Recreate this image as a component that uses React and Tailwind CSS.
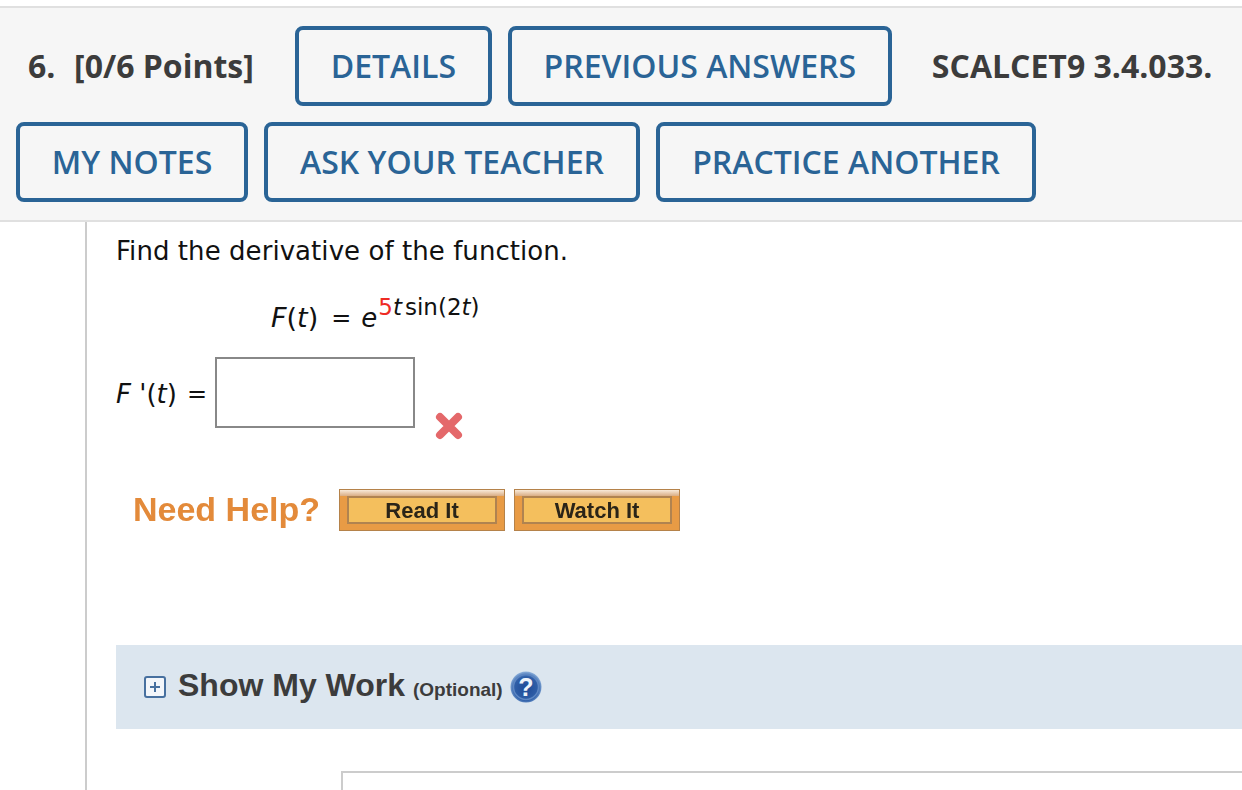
const OPEN = "font-['Open_Sans',sans-serif]";
const DEJA = "font-['DejaVu_Sans',sans-serif]";
const ARIAL = "font-['Liberation_Sans',Arial,sans-serif]";

function OutlineButton({ children, className = "" }) {
  return (
    <button className={`h-20 rounded-lg border-4 border-[#2a6496] bg-transparent text-[32px] font-semibold text-[#2a6496] ${className}`}>
      {children}
    </button>
  );
}

function HelpButton({ children }) {
  return (
    <button className="relative h-[42px] w-[166px] border border-[#b5824a] bg-[#e89b45] p-0">
      <span className="absolute left-0 right-0 top-0 h-[6px] bg-gradient-to-b from-[#f8ead9] to-[#d9ad84]" />
      <span className={`absolute left-[7px] right-[7px] top-[6px] bottom-[6px] flex items-center justify-center border-2 border-[#b08350] bg-[#f4bf5d] pt-[1px] text-[22px] font-bold text-[#2a2418] blur-[0.4px] ${ARIAL}`}>
        {children}
      </span>
    </button>
  );
}

export default function App() {
  return (
    <div className={`h-[790px] w-[1242px] overflow-hidden bg-white ${OPEN}`}>
      <header className="mt-[6px] flex h-[216px] flex-col gap-4 border-y-2 border-[#e0e0e0] bg-[#f6f6f6] pl-4 pt-[18px]">
        <div className="flex items-center">
          <span className="ml-3 whitespace-pre text-[32px] font-bold text-[#3c3c3c]">6.  <span className="ml-[2px]">[0/6 Points]</span></span>
          <OutlineButton className="ml-[41px] w-[197px]">DETAILS</OutlineButton>
          <OutlineButton className="ml-4 w-[384px]">PREVIOUS ANSWERS</OutlineButton>
          <span className="ml-10 text-[32px] font-bold text-[#3c3c3c]">SCALCET9 3.4.033.</span>
        </div>
        <div className="flex items-center gap-4">
          <OutlineButton className="w-[232px]">MY NOTES</OutlineButton>
          <OutlineButton className="w-[376px]">ASK YOUR TEACHER</OutlineButton>
          <OutlineButton className="w-[380px]">PRACTICE ANOTHER</OutlineButton>
        </div>
      </header>

      <main className="ml-[85px] h-[568px] border-l-2 border-[#cccccc] pl-[29px]">
        <p className={`pt-[11px] text-[26px] leading-[36px] tracking-[0.06px] text-[#111] ${DEJA}`}>Find the derivative of the function.</p>

        <div className={`mt-[23px] ml-[155px] flex h-[44px] items-end whitespace-pre text-[27px] leading-[36px] text-[#111] ${DEJA}`}>
          <span><i>F</i>(<i>t</i>)</span>
          <span className="ml-[13px] text-[24px]">=</span>
          <span className="ml-[10px] text-[26px]"><i>e</i></span>
          <span className="relative -top-[14px] ml-[1px] text-[23px] leading-[30px]">
            <span className="text-[#ee2b24]">5</span><i>t</i><span className="ml-[3px]">sin(2<i>t</i>)</span>
          </span>
        </div>

        <div className="mt-[21px] flex">
          <div className={`flex h-[70px] w-[99px] items-center whitespace-pre pt-[4px] text-[26px] text-[#111] ${DEJA}`}>
            <span><i>F</i> '(<i>t</i>)</span>
            <span className="ml-[10px] text-[24px]">=</span>
          </div>
          <div className="h-[71px] w-[200px] border-2 border-[#888888] bg-white" />
          <svg className="ml-[20px] mt-[55px] blur-[0.4px]" width="28" height="28" viewBox="0 0 28 28">
            <path d="M5 5 L23 23 M23 5 L5 23" stroke="#e4686a" strokeWidth="8" strokeLinecap="round" />
          </svg>
        </div>

        <div className="ml-[17px] mt-[44px] flex items-center">
          <span className={`text-[34px] font-bold text-[#e38a3a] blur-[0.4px] ${ARIAL}`}>Need Help?</span>
          <div className="ml-[19px] flex gap-[9px]">
            <HelpButton>Read It</HelpButton>
            <HelpButton>Watch It</HelpButton>
          </div>
        </div>

        <section className={`mt-[110px] flex h-[84px] items-center bg-[#dce6ef] pl-[28px] font-bold text-[#3c3c3c] ${ARIAL}`}>
          <span className="flex h-[22px] w-[22px] items-center justify-center rounded-[3px] border-2 border-[#47709f] bg-[#f3f6fa]">
            <svg width="12" height="12" viewBox="0 0 12 12">
              <path d="M6 1 V11 M1 6 H11" stroke="#47709f" strokeWidth="2" />
            </svg>
          </span>
          <span className="ml-3 -mt-[4px] text-[32px]">Show My Work</span>
          <span className="ml-2 mt-[6px] text-[19px]">(Optional)</span>
          <svg className="ml-[7px]" width="32" height="32" viewBox="0 0 32 32">
            <defs>
              <radialGradient id="helpball" cx="50%" cy="55%" r="55%">
                <stop offset="0%" stopColor="#1f4a96" />
                <stop offset="70%" stopColor="#2f5fa8" />
                <stop offset="100%" stopColor="#8fb2dc" />
              </radialGradient>
            </defs>
            <circle cx="16" cy="16" r="15.5" fill="url(#helpball)" />
            <circle cx="16" cy="16" r="12.5" fill="none" stroke="#5d86c2" strokeWidth="1.5" />
            <text x="16" y="25" textAnchor="middle" fontSize="25" fontWeight="700" fill="#eef3fa" fontFamily="Liberation Sans, sans-serif">?</text>
          </svg>
        </section>

        <div className="ml-[225px] mt-[42px] h-[40px] border-l-2 border-t-2 border-[#cccccc]" />
      </main>
    </div>
  );
}
